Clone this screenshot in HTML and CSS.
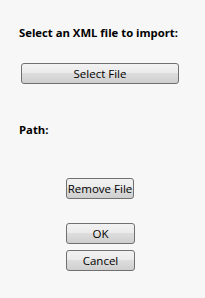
FILE: index.html
```html
<!DOCTYPE html>
<html lang="en">
<head>
    <meta charset="UTF-8">
    <title>Import XML</title>
    <link rel="stylesheet" href="styles.css">
</head>
<body>
    <div class="dialog">
        <p class="label title">Select an XML file to import:</p>
        <button class="btn wide">Select File</button>
        <p class="label path">Path:</p>
        <div class="actions">
            <button class="btn remove">Remove File</button>
            <button class="btn small ok">OK</button>
            <button class="btn small">Cancel</button>
        </div>
    </div>
</body>
</html>
```

FILE: styles.css
```css
body {
    margin: 0;
    background-color: #f7f7f7;
    font-family: "Open Sans", "DejaVu Sans", sans-serif;
    font-size: 11px;
    color: #000;
}

.dialog {
    width: 205px;
    height: 298px;
    padding: 26px 0 0 0;
    box-sizing: border-box;
    display: flex;
    flex-direction: column;
}

.label {
    margin: 0;
    font-weight: bold;
    font-size: 11.3px;
    line-height: 14px;
    padding-left: 19px;
}

.btn {
    font-family: inherit;
    font-size: 11.5px;
    color: #000;
    height: 21px;
    padding: 0;
    border: 1px solid #707070;
    border-radius: 3px;
    background: linear-gradient(to bottom, #f2f2f2 0%, #ebebeb 45%, #dddddd 50%, #cfcfcf 100%);
    box-sizing: border-box;
}

.wide {
    margin: 23px 0 0 21px;
    width: 158px;
}

.path {
    margin-top: 39px;
}

.actions {
    display: flex;
    flex-direction: column;
    align-items: flex-start;
    padding-left: 66px;
    margin-top: 41px;
}

.remove {
    width: 68px;
}

.small {
    width: 69px;
}

.ok {
    margin-top: 24px;
    margin-bottom: 6px;
}
```
